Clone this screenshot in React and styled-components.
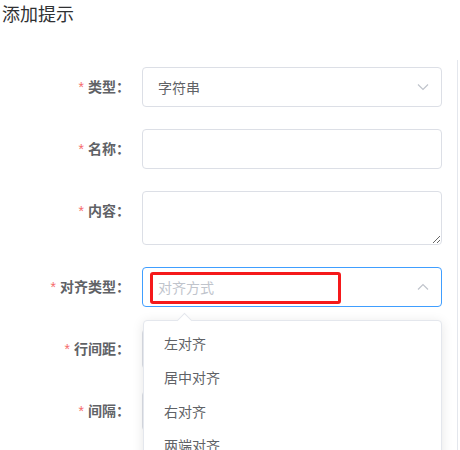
import React from "react";
import styled, { createGlobalStyle } from "styled-components";

const Global = createGlobalStyle`
  html, body { margin: 0; padding: 0; background: #fff; }
  body { font-family: "Helvetica Neue", Helvetica, "Noto Sans CJK SC", "Microsoft YaHei", sans-serif; }
  * { box-sizing: border-box; }
`;

const Page = styled.div`
  position: relative;
  width: 460px;
  height: 450px;
  overflow: hidden;
  background: #fff;
`;

const Title = styled.div`
  padding: 3px 2px 0;
  height: 60px;
  font-size: 18px;
  line-height: 24px;
  color: #303133;
`;

const Form = styled.div`
  width: 458px;
  min-height: 390px;
  padding-top: 7px;
  border-right: 1px solid #e4e7ed;
`;

const Item = styled.div`
  display: flex;
  align-items: flex-start;
  margin-bottom: 22px;
`;

const Label = styled.label`
  width: 142px;
  padding-right: 12px;
  text-align: right;
  font-size: 14px;
  font-weight: 700;
  line-height: 40px;
  color: #606266;
  &::before {
    content: "*";
    color: #f56c6c;
    margin-right: 4px;
    font-weight: 400;
  }
`;

const Content = styled.div`
  position: relative;
  width: 300px;
`;

const Box = styled.div`
  position: relative;
  height: 40px;
  border: 1px solid ${(p) => (p.$focus ? "#409eff" : "#dcdfe6")};
  border-radius: 4px;
  padding: 0 30px 0 15px;
  display: flex;
  align-items: center;
  font-size: 14px;
  color: ${(p) => (p.$placeholder ? "#c0c4cc" : "#606266")};
  background: #fff;
`;

const Arrow = styled.svg`
  position: absolute;
  right: 11px;
  top: 50%;
  margin-top: -7px;
  width: 14px;
  height: 14px;
`;

const Area = styled.textarea`
  display: block;
  width: 300px;
  height: 54px;
  border: 1px solid #dcdfe6;
  border-radius: 4px;
  padding: 5px 15px;
  font-family: inherit;
  font-size: 14px;
  resize: vertical;
  outline: none;
`;

const Mark = styled.div`
  position: absolute;
  left: 8px;
  top: 5px;
  width: 191px;
  height: 32px;
  border: 3px solid #f5191b;
  border-radius: 3px;
  pointer-events: none;
`;

const Dropdown = styled.div`
  position: absolute;
  z-index: 10;
  left: 1px;
  top: calc(100% + 13px);
  width: 299px;
  background: #fff;
  border: 1px solid #e4e7ed;
  border-radius: 4px;
  box-shadow: 0 2px 12px 0 rgba(0, 0, 0, 0.1);
  padding: 6px 0;
  &::before {
    content: "";
    position: absolute;
    top: -6px;
    left: 35px;
    width: 10px;
    height: 10px;
    background: #fff;
    border-left: 1px solid #e4e7ed;
    border-top: 1px solid #e4e7ed;
    transform: rotate(45deg);
  }
`;

const Option = styled.div`
  height: 34px;
  line-height: 34px;
  padding: 0 20px;
  font-size: 14px;
  color: #606266;
`;

const Chevron = ({ up }) => (
  <Arrow viewBox="0 0 14 14">
    <polyline
      points={up ? "2,9.5 7,4.5 12,9.5" : "2,4.5 7,9.5 12,4.5"}
      fill="none"
      stroke="#c0c4cc"
      strokeWidth="1.2"
    />
  </Arrow>
);

export default function App() {
  return (
    <Page>
      <Global />
      <Title>添加提示</Title>
      <Form>
        <Item>
          <Label>类型：</Label>
          <Content>
            <Box>
              字符串
              <Chevron />
            </Box>
          </Content>
        </Item>
        <Item>
          <Label>名称：</Label>
          <Content>
            <Box />
          </Content>
        </Item>
        <Item>
          <Label>内容：</Label>
          <Content>
            <Area />
          </Content>
        </Item>
        <Item>
          <Label>对齐类型：</Label>
          <Content>
            <Box $focus $placeholder>
              对齐方式
              <Chevron up />
            </Box>
            <Mark />
            <Dropdown>
              <Option>左对齐</Option>
              <Option>居中对齐</Option>
              <Option>右对齐</Option>
              <Option>两端对齐</Option>
            </Dropdown>
          </Content>
        </Item>
        <Item>
          <Label>行间距：</Label>
          <Content>
            <Box />
          </Content>
        </Item>
        <Item>
          <Label>间隔：</Label>
          <Content>
            <Box />
          </Content>
        </Item>
      </Form>
    </Page>
  );
}
